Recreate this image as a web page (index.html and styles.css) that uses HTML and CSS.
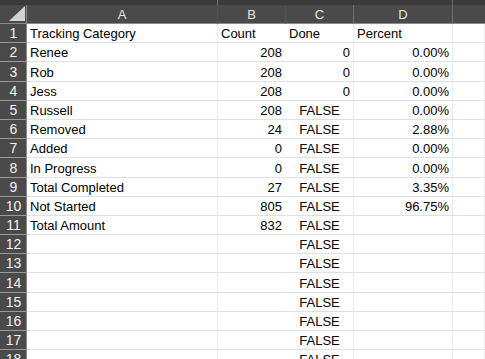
FILE: index.html
```html
<!DOCTYPE html>
<html>
<head>
<meta charset="utf-8">
<link rel="stylesheet" href="styles.css">
</head>
<body>
<div class="topstrip">
  <div class="ts ts-a"></div>
  <div class="ts ts-b"></div>
  <div class="ts ts-c"></div>
</div>
<div class="sheet">
  <div class="corner"><svg width="16" height="15" viewBox="0 0 16 15"><polygon points="16,0 16,15 0,15" fill="#d2d2d2"/></svg></div>
  <div class="ch ch-faint">A</div><div class="ch ch-faint">B</div><div class="ch">C</div><div class="ch">D</div><div class="ch ch-last"></div>

  <div class="rh">1</div><div class="c">Tracking Category</div><div class="c nb">Count</div><div class="c">Done</div><div class="c">Percent</div><div class="c"></div>
  <div class="rh">2</div><div class="c">Renee</div><div class="c nb r">208</div><div class="c r">0</div><div class="c r">0.00%</div><div class="c"></div>
  <div class="rh">3</div><div class="c">Rob</div><div class="c nb r">208</div><div class="c r">0</div><div class="c r">0.00%</div><div class="c"></div>
  <div class="rh">4</div><div class="c">Jess</div><div class="c nb r">208</div><div class="c r">0</div><div class="c r">0.00%</div><div class="c"></div>
  <div class="rh">5</div><div class="c">Russell</div><div class="c nb r">208</div><div class="c m">FALSE</div><div class="c r">0.00%</div><div class="c"></div>
  <div class="rh">6</div><div class="c">Removed</div><div class="c nb r">24</div><div class="c m">FALSE</div><div class="c r">2.88%</div><div class="c"></div>
  <div class="rh">7</div><div class="c">Added</div><div class="c nb r">0</div><div class="c m">FALSE</div><div class="c r">0.00%</div><div class="c"></div>
  <div class="rh">8</div><div class="c">In Progress</div><div class="c nb r">0</div><div class="c m">FALSE</div><div class="c r">0.00%</div><div class="c"></div>
  <div class="rh">9</div><div class="c">Total Completed</div><div class="c nb r">27</div><div class="c m">FALSE</div><div class="c r">3.35%</div><div class="c"></div>
  <div class="rh">10</div><div class="c">Not Started</div><div class="c nb r">805</div><div class="c m">FALSE</div><div class="c r">96.75%</div><div class="c"></div>
  <div class="rh">11</div><div class="c">Total Amount</div><div class="c nb r">832</div><div class="c m">FALSE</div><div class="c"></div><div class="c"></div>
  <div class="rh">12</div><div class="c"></div><div class="c nb"></div><div class="c m">FALSE</div><div class="c"></div><div class="c"></div>
  <div class="rh">13</div><div class="c"></div><div class="c nb"></div><div class="c m">FALSE</div><div class="c"></div><div class="c"></div>
  <div class="rh">14</div><div class="c"></div><div class="c nb"></div><div class="c m">FALSE</div><div class="c"></div><div class="c"></div>
  <div class="rh">15</div><div class="c"></div><div class="c nb"></div><div class="c m">FALSE</div><div class="c"></div><div class="c"></div>
  <div class="rh">16</div><div class="c"></div><div class="c nb"></div><div class="c m">FALSE</div><div class="c"></div><div class="c"></div>
  <div class="rh">17</div><div class="c"></div><div class="c nb"></div><div class="c m">FALSE</div><div class="c"></div><div class="c"></div>
  <div class="rh">18</div><div class="c"></div><div class="c nb"></div><div class="c m">FALSE</div><div class="c"></div><div class="c"></div>
</div>
</body>
</html>
```
FILE: styles.css
```css
html, body {
  margin: 0;
  padding: 0;
  background: #ffffff;
  overflow: hidden;
  height: 359px;
}
body {
  font-family: "Liberation Sans", Arial, sans-serif;
  font-size: 13px;
  color: #000;
}
.topstrip {
  display: grid;
  grid-template-columns: 218px 235px 1fr;
  height: 5px;
  background: #3a3a3a;
}
.ts {
  border-right: 1px solid #6a6a6a;
}
.ts-c { border-right: none; }
.sheet {
  display: grid;
  grid-template-columns: 27px 191px 68px 68px 99px 1fr;
  grid-template-rows: 19px;
  grid-auto-rows: 19.2px;
}
.corner {
  background: #4a4a4a;
  border-right: 1px solid #8a8a8a;
  border-bottom: 1px solid #8a8a8a;
  box-sizing: border-box;
  display: flex;
  align-items: flex-start;
  justify-content: flex-end;
  padding: 1px 1px 0 0;
}
.ch {
  background: #4a4a4a;
  color: #e6e6e6;
  box-sizing: border-box;
  border-right: 1px solid #6e6e6e;
  border-bottom: 1px solid #8a8a8a;
  display: flex;
  align-items: center;
  justify-content: center;
  font-size: 13px;
  padding-top: 1px;
}
.ch-faint { border-right-color: #525252; }
.ch-last { border-right: none; }
.rh {
  background: #4a4a4a;
  color: #f2f2f2;
  box-sizing: border-box;
  border-right: 1px solid #8a8a8a;
  border-bottom: 1px solid #9a9a9a;
  display: flex;
  align-items: flex-end;
  justify-content: center;
  line-height: 15px;
  font-size: 14px;
  padding-bottom: 1px;
  padding-left: 1px;
}
.c {
  box-sizing: border-box;
  border-right: 1px solid #ececec;
  border-bottom: 1px solid #e1e1e1;
  display: flex;
  align-items: flex-end;
  justify-content: flex-start;
  line-height: 15px;
  padding: 0 3px 1px 3px;
  white-space: nowrap;
  overflow: visible;
  min-width: 0;
}
.nb { border-right-color: #ffffff; }
.r { justify-content: flex-end; }
.m { justify-content: center; }
```
